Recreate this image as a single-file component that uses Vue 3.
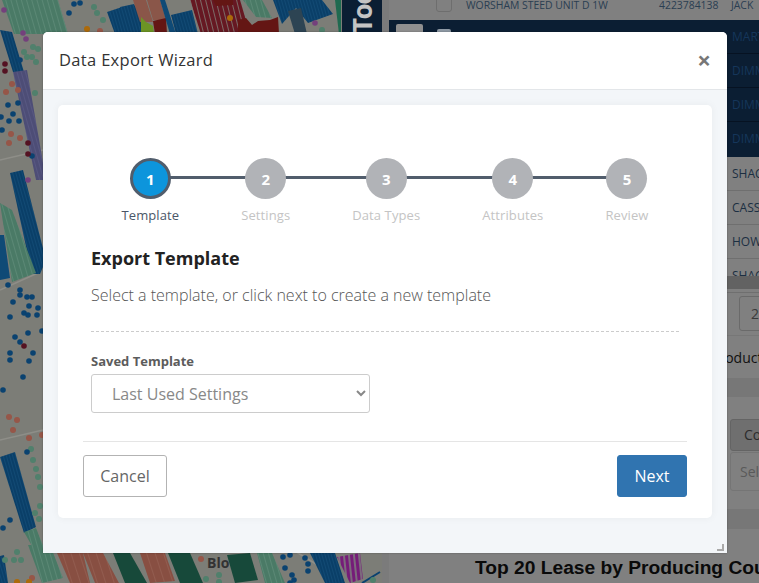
<script setup>
const steps = [
  { n: 1, label: 'Template', active: true },
  { n: 2, label: 'Settings' },
  { n: 3, label: 'Data Types' },
  { n: 4, label: 'Attributes' },
  { n: 5, label: 'Review' }
]

const navyRows = ['MART', 'DIMM', 'DIMM', 'DIMM']
const lightRows = ['SHAC', 'CASS', 'HOWA', 'SHAC']

const blocks = [
  // top strip
  { p: '2,0 58,0 68,34 14,34', f: 'url(#greenH)' },
  { p: '107,12 122,7 138,34 115,34', f: 'url(#blueH)' },
  { p: '120,7 134,4 150,34 132,34', f: 'url(#blueH)' },
  { p: '133,0 146,0 153,22 140,22', f: '#8a5649' },
  { p: '147,0 160,0 166,20 153,20', f: '#8a5649' },
  { p: '141,17 146,22 153,26 154,34 141,34', f: '#6c9424' },
  { p: '153,21 166,18 167,34 155,34', f: '#641614' },
  { p: '160,0 165,0 176,34 170,34', f: '#0f4a76' },
  { p: '171,15 192,10 198,34 176,34', f: 'url(#blueH)' },
  { p: '190,0 240,0 250,34 201,34', f: 'url(#redH)' },
  { p: '213,0 233,0 233,5 216,6', f: '#641614' },
  { p: '238,20 246,18 252,25 258,21 270,20 278,17 279,34 238,34', f: '#641614' },
  { p: '243,0 262,0 272,18 256,17', f: 'url(#greenH)' },
  { p: '273,0 322,0 333,14 308,23 296,8 282,24', f: 'url(#blueH)' },
  { p: '288,11 301,8 307,34 295,34', f: '#2d4453' },
  { p: '335,0 341,0 341,34 339,34', f: '#1f6a50' },
  // left strip
  { p: '0,30 12,32 24,72 13,72', f: 'url(#blueH)' },
  { p: '13,72 27,70 46,180 36,180', f: 'url(#purpleH)' },
  { p: '10,173 23,170 46,260 40,274 32,274', f: 'url(#blueH)' },
  { p: '0,203 12,210 36,273 12,282', f: 'url(#greenH)' },
  { p: '0,235 4,235 10,278 0,280', f: '#0f4a76' },
  { p: '0,457 15,452 36,527 24,533', f: 'url(#blueH)' },
  { p: '24,532 36,528 46,553 36,553', f: 'url(#greenH)' },
  { p: '0,556 4,555 8,583 0,583', f: 'url(#blueH)' },
  // bottom strip
  { p: '28,545 50,545 63,578 42,583', f: 'url(#greenH)' },
  { p: '57,553 83,553 90,583 70,583', f: 'url(#redS)' },
  { p: '83,553 103,553 119,583 95,583', f: 'url(#redS)' },
  { p: '113,553 130,553 147,583 125,583', f: '#17493a' },
  { p: '140,553 165,553 175,581 150,583', f: 'url(#redS)' },
  { p: '168,553 190,553 203,583 180,583', f: '#17493a' },
  { p: '227,555 250,553 258,580 235,583', f: '#17493a' },
  { p: '257,553 272,553 285,583 265,583', f: 'url(#greenH)' },
  { p: '310,553 335,553 345,583 325,583', f: 'url(#blueH)' },
  { p: '337,557 360,553 363,579 350,583', f: 'url(#magentaH)' }
]

const blue = [[74,4],[80,3],[69,13],[20,60],[8,105],[18,103],[13,114],[9,121],[19,121],[1,117],[2,130],[32,156],[8,285],[20,290],[20,295],[27,297],[32,297],[13,302],[29,306],[38,308],[24,313],[28,315],[37,315],[10,317],[42,331],[15,337],[28,333],[20,342],[33,353],[10,353],[10,360],[29,361],[23,377],[3,390],[27,452],[3,528],[10,520],[283,557],[290,555],[305,558],[308,564],[308,571],[285,568],[292,575],[294,580],[290,583]]
const green = [[94,7],[97,13],[103,20],[33,47],[38,49],[24,52],[27,57],[32,57],[36,62],[35,93],[31,449],[33,460],[36,469],[38,477],[40,487],[40,506],[35,513],[39,519],[17,552],[5,560],[14,560],[21,560],[206,579],[219,575],[219,582],[322,30],[373,580]]
const salmon = [[100,31],[12,84],[6,92],[18,90],[11,134],[20,138],[9,143],[9,417],[17,420],[13,430],[29,438],[42,435],[32,578],[201,559]]
const maroon = [[5,71],[5,64],[28,143],[28,154],[24,346]]
const purple = [[26,39],[23,33],[4,10],[315,23],[28,180]]
const orange = [[87,29],[17,582],[29,582],[230,18]]
</script>

<template>
  <div class="page">
    <div class="backdrop">
      <div class="map">
        <svg class="map-art" width="382" height="583" viewBox="0 0 382 583">
          <defs>
            <pattern id="blueH" width="3" height="3" patternUnits="userSpaceOnUse" patternTransform="rotate(-16)">
              <rect width="3" height="3" fill="#0a3f68" /><rect width="1" height="3" fill="#124a74" />
            </pattern>
            <pattern id="greenH" width="5" height="5" patternUnits="userSpaceOnUse" patternTransform="rotate(-16)">
              <rect width="5" height="5" fill="#4a7a66" /><rect width="1" height="5" fill="#5b8875" />
            </pattern>
            <pattern id="redH" width="5" height="5" patternUnits="userSpaceOnUse" patternTransform="rotate(-14)">
              <rect width="5" height="5" fill="#7c6a66" /><rect width="4" height="5" fill="#661822" />
            </pattern>
            <pattern id="redS" width="8" height="8" patternUnits="userSpaceOnUse" patternTransform="rotate(-18)">
              <rect width="8" height="8" fill="#884f42" /><rect width="1" height="8" fill="#925c4f" />
            </pattern>
            <pattern id="purpleH" width="4" height="4" patternUnits="userSpaceOnUse" patternTransform="rotate(-16)">
              <rect width="4" height="4" fill="#4d4d76" /><rect width="1" height="4" fill="#575781" />
            </pattern>
            <pattern id="magentaH" width="5" height="5" patternUnits="userSpaceOnUse" patternTransform="rotate(-6)">
              <rect width="5" height="5" fill="#7c6a7c" /><rect width="3" height="5" fill="#751c78" />
            </pattern>
          </defs>
          <path d="M0 290 L40 272 M0 440 L43 430 M0 160 L43 150 M285 545 L342 580" class="road" />
          <path d="M362 583 L380 572" class="river" />
          <polygon v-for="(b, i) in blocks" :key="i" :points="b.p" :fill="b.f" />
          <circle v-for="(d, i) in green" :key="'g' + i" :cx="d[0]" :cy="d[1]" r="3" fill="#50806c" />
          <circle v-for="(d, i) in blue" :key="'b' + i" :cx="d[0]" :cy="d[1]" r="2.8" fill="#0a4270" />
          <circle v-for="(d, i) in salmon" :key="'s' + i" :cx="d[0]" :cy="d[1]" r="3" fill="#965648" />
          <circle v-for="(d, i) in maroon" :key="'m' + i" :cx="d[0]" :cy="d[1]" r="2.8" fill="#541222" />
          <circle v-for="(d, i) in purple" :key="'p' + i" :cx="d[0]" :cy="d[1]" r="2.8" fill="#74407c" />
          <circle v-for="(d, i) in orange" :key="'o' + i" :cx="d[0]" :cy="d[1]" r="3" fill="#ac6a0a" />
        </svg>
        <span class="map-label">Blo</span>
      </div>
      <div class="toolbar"><span class="toolbar-title">Tools</span></div>
      <div class="results">
        <div class="gutter"></div>
        <div class="results-main">
          <div class="top-row">
            <span class="box"></span>
            <span class="lease">WORSHAM STEED UNIT D 1W</span>
            <span class="api">4223784138</span>
            <span class="oper">JACK</span>
          </div>
          <div class="navy">
            <div v-for="(r, i) in navyRows" :key="i" class="navy-row">
              <template v-if="i === 0">
                <span class="navy-btn"></span>
                <span class="navy-check"></span>
              </template>
              <span class="cell">{{ r }}</span>
            </div>
          </div>
          <div v-for="(r, i) in lightRows" :key="i" class="light-row"><span class="cell">{{ r }}</span></div>
          <div class="split-bar"></div>
          <div class="pager"><span class="pager-box">20</span></div>
          <div class="product"><span>Production</span></div>
          <div class="band"></div>
          <div class="filters">
            <span class="col-btn">Column</span>
            <span class="col-select">Select</span>
          </div>
          <div class="band low"></div>
        </div>
      </div>
      <div class="chart-title">Top 20 Lease by Producing County</div>
    </div>

    <div class="modal">
      <header class="modal-head">
        <h2>Data Export Wizard</h2>
        <span class="close">×</span>
      </header>
      <div class="modal-body">
        <section class="card">
          <ol class="stepper">
            <li v-for="s in steps" :key="s.n" class="step" :class="{ active: s.active }">
              <span class="dot">{{ s.n }}</span>
              <span class="step-label">{{ s.label }}</span>
            </li>
          </ol>
          <div class="content">
            <h3>Export Template</h3>
            <p>Select a template, or click next to create a new template</p>
            <div class="dash"></div>
            <label class="field-label" for="tpl">Saved Template</label>
            <select id="tpl" class="field">
              <option>Last Used Settings</option>
            </select>
          </div>
          <footer class="actions">
            <button class="btn cancel" type="button">Cancel</button>
            <button class="btn next" type="button">Next</button>
          </footer>
        </section>
      </div>
      <span class="grip"></span>
    </div>
  </div>
</template>

<style>
html, body { margin: 0; overflow: hidden; }
</style>

<style scoped>
.page {
  position: relative;
  width: 759px;
  height: 583px;
  overflow: hidden;
  font-family: "Open Sans", sans-serif;
  background: #808080;
}
.backdrop {
  position: absolute;
  inset: 0;
  display: flex;
}
.map {
  position: relative;
  width: 382px;
  flex: none;
  background: #7c7d77;
}
.map-art { display: block; }
.road { stroke: #8e8e88; stroke-width: 1.5; fill: none; }
.river { stroke: #0a4270; stroke-width: 2; fill: none; }
.map-label {
  position: absolute;
  left: 207px;
  top: 553px;
  font-size: 14px;
  font-weight: 700;
  color: #333;
}
.toolbar {
  position: absolute;
  left: 342px;
  top: 0;
  width: 40px;
  height: 120px;
  background: #0b1e33;
  display: flex;
  justify-content: center;
}
.toolbar-title {
  display: block;
  height: 33px;
  writing-mode: vertical-rl;
  transform: rotate(180deg);
  font-size: 26px;
  font-weight: 700;
  line-height: 28px;
  letter-spacing: -1.5px;
  color: #c4c4c4;
  white-space: nowrap;
}
.results {
  flex: 1;
  display: flex;
  min-width: 0;
  background: #808080;
}
.gutter { width: 7px; flex: none; background: #7b7b7b; }
.results-main { flex: 1; min-width: 0; font-size: 10.4px; color: #2a3e52; overflow: hidden; }
.top-row {
  height: 20px;
  position: relative;
  white-space: nowrap;
}
.top-row span { position: absolute; top: -2px; }
.top-row .box {
  left: 47px;
  top: -4px;
  width: 14px;
  height: 14px;
  border: 1px solid #6e6e6e;
  border-radius: 3px;
}
.lease { left: 77px; }
.api { left: 270px; }
.oper { left: 342px; }
.navy { background: #0b1e33; padding-bottom: 2px; }
.navy-row {
  position: relative;
  height: 33px;
  border-bottom: 1px solid #061222;
  display: flex;
  align-items: center;
  padding-left: 343px;
  color: #15365a;
  font-size: 12px;
}
.navy-row:last-child { border-bottom: 0; }
.navy-btn {
  position: absolute;
  left: 7px;
  top: 4px;
  width: 27px;
  height: 26px;
  background: #8f8f8f;
  border-radius: 2px;
}
.navy-check {
  position: absolute;
  left: 48px;
  top: 9px;
  width: 14px;
  height: 14px;
  background: #8f9aa5;
  border-radius: 2px;
}
.light-row {
  height: 33px;
  border-bottom: 1px solid #6f6f6f;
  display: flex;
  align-items: center;
  padding-left: 343px;
  font-size: 12px;
  color: #1c2f42;
}
.cell { white-space: nowrap; }
.split-bar { height: 13px; margin-top: -17px; position: relative; background: #626262; }
.pager {
  height: 47px;
  box-sizing: border-box;
  padding: 7px 0 0 350px;
  border-bottom: 1px solid #777;
}
.pager-box {
  display: block;
  width: 60px;
  height: 35px;
  box-sizing: border-box;
  line-height: 33px;
  border: 1px solid #6a6a6a;
  border-radius: 3px;
  padding-left: 11px;
  font-size: 14px;
  color: #3a3a3a;
}
.product {
  height: 42px;
  display: flex;
  align-items: center;
  padding-left: 322px;
  font-size: 14px;
  color: #111;
  white-space: nowrap;
}
.band { height: 19px; background: #777; }
.band.low { height: 20px; }
.filters {
  height: 112px;
  box-sizing: border-box;
  padding: 22px 0 0 341px;
  display: flex;
  flex-direction: column;
  gap: 1px;
}
.col-btn {
  display: block;
  box-sizing: border-box;
  height: 32px;
  line-height: 30px;
  width: 70px;
  padding-left: 13px;
  background: #6f6f6f;
  border: 1px solid #646464;
  border-radius: 3px;
  color: #2c2c2c;
  font-size: 14px;
}
.col-select {
  display: block;
  box-sizing: border-box;
  height: 39px;
  line-height: 37px;
  width: 70px;
  padding-left: 9px;
  border: 1px solid #757575;
  border-radius: 3px;
  color: #5a5a5a;
  font-size: 14px;
}
.chart-title {
  position: absolute;
  left: 475px;
  top: 557px;
  font-family: "Liberation Sans", sans-serif;
  font-size: 19.2px;
  line-height: 22px;
  font-weight: 700;
  color: #0a0a0a;
  white-space: nowrap;
}

.modal {
  position: absolute;
  left: 43px;
  top: 32px;
  width: 684px;
  height: 521px;
  display: flex;
  flex-direction: column;
  background: #f3f6f9;
  border-radius: 5px 5px 0 0;
  box-shadow: 0 0 2px rgba(0, 0, 0, 0.35);
}
.modal-head {
  height: 57px;
  flex: none;
  box-sizing: content-box;
  display: flex;
  align-items: center;
  justify-content: space-between;
  padding: 0 16px;
  background: #fff;
  border-bottom: 1px solid #e3e6e9;
  border-radius: 5px 5px 0 0;
}
h2 {
  margin: -2px 0 0;
  font-size: 16.5px;
  font-weight: 400;
  color: #333;
  letter-spacing: 0.33px;
}
.close {
  font-size: 24px;
  line-height: 24px;
  font-weight: 700;
  color: #777;
  margin-top: -1px;
}
.modal-body { padding: 15px 15px 0; }
.card {
  height: 413px;
  box-sizing: border-box;
  background: #fff;
  border-radius: 5px;
  box-shadow: 0 0 8px rgba(0, 0, 0, 0.05);
  padding: 53px 25px 0;
  display: flex;
  flex-direction: column;
}
.stepper {
  position: relative;
  list-style: none;
  margin: 0;
  padding: 0;
  display: flex;
  justify-content: center;
  gap: 62px;
}
.stepper::before {
  content: "";
  position: absolute;
  left: 80px;
  right: 80px;
  top: 18px;
  height: 3px;
  background: #515d6c;
}
.step {
  position: relative;
  display: flex;
  flex-direction: column;
  align-items: center;
}
.dot {
  width: 41px;
  height: 41px;
  box-sizing: border-box;
  border-radius: 50%;
  background: #b1b3b7;
  color: #fff;
  font-size: 15px;
  font-weight: 700;
  display: flex;
  align-items: center;
  justify-content: center;
}
.step.active .dot {
  background: #0d95dc;
  border: 3px solid #515d6c;
}
.step-label {
  margin-top: 7px;
  font-size: 13px;
  letter-spacing: 0.1px;
  line-height: 18px;
  color: #c4c4c4;
  white-space: nowrap;
}
.step.active .step-label { color: #4a5668; }
.content { padding: 0 8px; }
h3 {
  margin: 22px 0 0;
  font-size: 18px;
  line-height: 25px;
  font-weight: 700;
  color: #222;
}
p {
  margin: 13px 0 0;
  font-size: 16px;
  line-height: 22px;
  font-weight: 300;
  color: #555;
}
.dash {
  margin-top: 25px;
  border-top: 1px dashed #ccc;
}
.field-label {
  display: block;
  margin-top: 20px;
  font-size: 13px;
  line-height: 18px;
  font-weight: 700;
  color: #5c5c5c;
}
.field {
  display: block;
  margin-top: 4px;
  width: 279px;
  height: 39px;
  box-sizing: border-box;
  padding: 0 16px;
  background: #fff;
  border: 1px solid #ccc;
  border-radius: 3px;
  font-family: inherit;
  font-size: 16px;
  color: #888;
  outline: none;
}
.actions {
  margin-top: 28px;
  border-top: 1px solid #e5e5e5;
  padding-top: 13px;
  display: flex;
  justify-content: space-between;
}
.btn {
  height: 42px;
  box-sizing: border-box;
  border-radius: 3px;
  font-family: inherit;
  font-size: 16px;
  cursor: pointer;
}
.cancel {
  width: 84px;
  background: #fff;
  border: 1px solid #b3b3b3;
  color: #666;
}
.next {
  width: 70px;
  background: #3074b0;
  border: 1px solid #3074b0;
  color: #fff;
}
.grip {
  position: absolute;
  right: 3px;
  bottom: 2px;
  width: 5px;
  height: 5px;
  border-right: 2px solid #a9a9a9;
  border-bottom: 2px solid #a9a9a9;
}
</style>
